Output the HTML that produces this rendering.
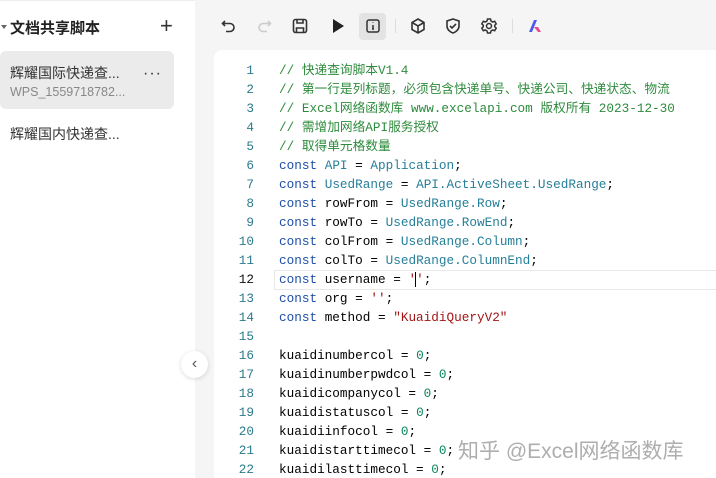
<!DOCTYPE html>
<html style="overflow:hidden;width:716px;height:478px"><head><meta charset="utf-8"><style>
*{margin:0;padding:0;box-sizing:border-box}
body{width:716px;height:478px;overflow:hidden;background:#f5f5f5;font-family:"Liberation Sans","Noto Sans CJK SC",sans-serif;position:relative}
.left{position:absolute;left:0;top:0;width:195px;height:478px;background:#fff;border-top:1px solid #eee}
.hdr{position:absolute;left:10px;top:16px;font-size:15px;font-weight:bold;color:#222}
.tri{position:absolute;left:1px;top:24px;width:0;height:0;border-left:3px solid transparent;border-right:3px solid transparent;border-top:4px solid #666}
.plus{position:absolute;left:160px;top:12px;font-size:22px;color:#333;font-weight:300}
.sel{position:absolute;left:0;top:50px;width:174px;height:58px;background:#ebebeb;border-radius:6px}
.t1{position:absolute;left:10px;top:62px;font-size:14px;color:#333}
.t2{position:absolute;left:10px;top:84px;font-size:12.5px;color:#888}
.dots{position:absolute;left:143px;top:64px;font-size:16px;color:#333;letter-spacing:1px}
.t3{position:absolute;left:10px;top:123px;font-size:14px;color:#333}
.card{position:absolute;left:214px;top:50px;width:502px;height:428px;background:#fff;border-radius:8px 0 0 0}
.code{position:absolute;left:214px;top:61px;font-family:"Liberation Mono","Noto Sans CJK SC",monospace;font-size:12.7px;line-height:19px;white-space:pre}
.ln{position:absolute;left:214px;top:61px;width:40px;text-align:right;font-family:"Liberation Mono",monospace;font-size:12.7px;line-height:19px;color:#2b7a8c;white-space:pre}
.ln .a{color:#111}
.c{color:#2e8b3d}.k{color:#1f4fa8}.p{color:#267f99}.s{color:#a31515}.n{color:#098658}
.cur{position:absolute;left:274px;top:270px;width:450px;height:20px;border:1px solid #e8e8e8;border-right:none}
.collapse{position:absolute;left:181px;top:351px;width:27px;height:27px;border-radius:50%;background:#fff;box-shadow:0 1px 4px rgba(0,0,0,.15);color:#555;font-size:16px;text-align:center;line-height:25px}
.wm{position:absolute;left:458px;top:435px;font-size:21px;color:rgba(160,160,160,.85);text-shadow:0 0 2px #fff;white-space:nowrap}
.tb svg{position:absolute;top:17px}
.active{position:absolute;left:359px;top:13px;width:27px;height:27px;background:#e3e3e3;border-radius:4px}
.sep{position:absolute;top:19px;width:1px;height:14px;background:#ddd}
</style></head><body>
<div class="left">
<div class="tri"></div><div class="hdr">文档共享脚本</div><div class="plus">+</div>
<div class="sel"></div>
<div class="t1">辉耀国际快递查...</div>
<div class="t2">WPS_1559718782...</div>
<div class="dots">···</div>
<div class="t3">辉耀国内快递查...</div>
</div>
<div class="active"></div>
<div class="sep" style="left:395px"></div><div class="sep" style="left:512px"></div>
<div class="tb">
<svg style="left:220px" width="18" height="18" viewBox="0 0 18 18" fill="none" stroke="#333" stroke-width="1.6"><path d="M5 4L2.5 6.5 5 9M3 6.5h7a4 4 0 010 8H6"/></svg>
<svg style="left:255px" width="18" height="18" viewBox="0 0 18 18" fill="none" stroke="#ccc" stroke-width="1.6"><path d="M13 4l2.5 2.5L13 9M15 6.5H8a4 4 0 000 8h4"/></svg>
<svg style="left:291px" width="18" height="18" viewBox="0 0 18 18" fill="none" stroke="#333" stroke-width="1.6"><rect x="2.5" y="2.5" width="13" height="13" rx="2"/><path d="M6 3v3h6V3M5.5 15v-4h7v4"/></svg>
<svg style="left:329px" width="18" height="18" viewBox="0 0 18 18"><path d="M4 2l11 7-11 7z" fill="#222"/></svg>
<svg style="left:364px" width="18" height="18" viewBox="0 0 18 18" fill="none" stroke="#333" stroke-width="1.5"><rect x="3" y="3" width="12" height="12" rx="2"/><path d="M9 8v4M8 12h2M9 5.5v.5"/></svg>
<svg style="left:409px" width="18" height="18" viewBox="0 0 18 18" fill="none" stroke="#333" stroke-width="1.6"><path d="M9 2l6 3.5v7L9 16l-6-3.5v-7zM3 5.5L9 9l6-3.5M9 9v7"/></svg>
<svg style="left:444px" width="18" height="18" viewBox="0 0 18 18" fill="none" stroke="#333" stroke-width="1.6"><path d="M9 2l6 2v5c0 3.5-3 6-6 7-3-1-6-3.5-6-7V4zM6 9l2 2 4-4"/></svg>
<svg style="left:480px" width="18" height="18" viewBox="0 0 18 18" fill="none" stroke="#333" stroke-width="1.5"><circle cx="9" cy="9" r="2.5"/><path d="M7.5 2h3l.5 2 1.7 1 2-.7 1.5 2.6-1.5 1.4v1.4l1.5 1.4-1.5 2.6-2-.7-1.7 1-.5 2h-3l-.5-2-1.7-1-2 .7-1.5-2.6 1.5-1.4V8.3L1.8 6.9l1.5-2.6 2 .7 1.7-1z"/></svg>
<svg style="left:526px" width="18" height="18" viewBox="0 0 18 18"><path d="M3 15L8 3h3L6 15z" fill="#4a5cf0"/><path d="M8 10h4l3 5h-3z" fill="#e84a8a"/></svg>
</div>
<div class="card"></div>
<div class="cur"></div>
<div class="ln">1
2
3
4
5
6
7
8
9
10
11
<span class="a">12</span>
13
14
15
16
17
18
19
20
21
22</div>
<div class="code" style="left:279px"><span class="c">// 快递查询脚本V1.4
// 第一行是列标题，必须包含快递单号、快递公司、快递状态、物流
// Excel网络函数库 www.excelapi.com 版权所有 2023-12-30
// 需增加网络API服务授权
// 取得单元格数量</span>
<span class="k">const</span> <span class="p">API</span> = <span class="p">Application</span>;
<span class="k">const</span> <span class="p">UsedRange</span> = <span class="p">API.ActiveSheet.UsedRange</span>;
<span class="k">const</span> rowFrom = <span class="p">UsedRange.Row</span>;
<span class="k">const</span> rowTo = <span class="p">UsedRange.RowEnd</span>;
<span class="k">const</span> colFrom = <span class="p">UsedRange.Column</span>;
<span class="k">const</span> colTo = <span class="p">UsedRange.ColumnEnd</span>;
<span class="k">const</span> username = <span class="s">'<span style="border-left:1.5px solid #000;margin-left:-1px"></span>'</span>;
<span class="k">const</span> org = <span class="s">''</span>;
<span class="k">const</span> method = <span class="s">"KuaidiQueryV2"</span>

kuaidinumbercol = <span class="n">0</span>;
kuaidinumberpwdcol = <span class="n">0</span>;
kuaidicompanycol = <span class="n">0</span>;
kuaidistatuscol = <span class="n">0</span>;
kuaidiinfocol = <span class="n">0</span>;
kuaidistarttimecol = <span class="n">0</span>;
kuaidilasttimecol = <span class="n">0</span>;</div>
<div class="collapse">&#8249;</div>
<div class="wm">知乎 @Excel网络函数库</div>
</body></html>
